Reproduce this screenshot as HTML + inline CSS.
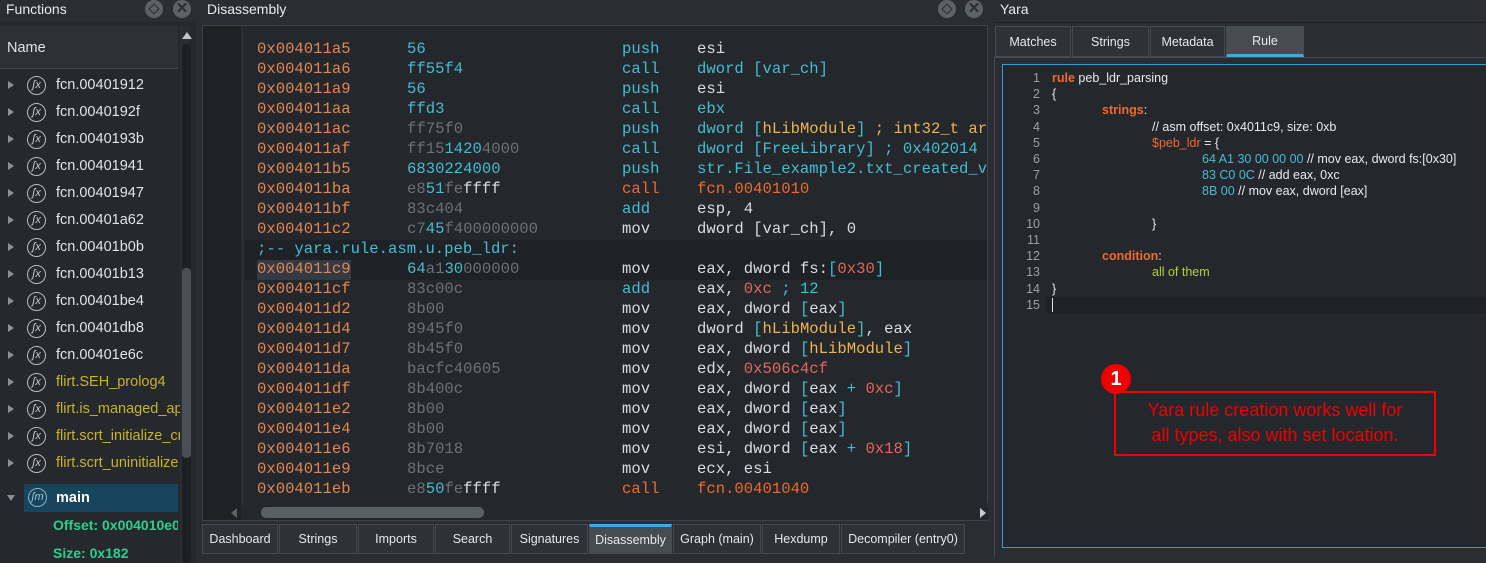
<!DOCTYPE html>
<html><head><meta charset="utf-8"><style>
*{margin:0;padding:0;box-sizing:border-box}
body{width:1486px;height:563px;background:#2a2e33;position:relative;overflow:hidden;font-family:"Liberation Sans",sans-serif;color:#e0e4e8}
.a{position:absolute}
.title{font-size:14px;color:#e8eaec}
.mono{font-family:"Liberation Mono",monospace;font-size:15.6px;white-space:pre}
.ln{position:absolute;left:257px;width:731px;height:20px;line-height:20px}
.ln>span{position:absolute;top:0}
.A{left:0}.B{left:150px}.M{left:365px}.P{left:440px}
.c{color:#45bcd2}.o{color:#e28652}.w{color:#d8dde2}.g{color:#6c7176}.n{color:#e3675a}.y{color:#e9b552}.r{color:#ef6a2a}
.fr{position:absolute;left:24px;height:27px;line-height:27px;font-size:14.5px;width:156px;overflow:hidden;white-space:nowrap}
.tri{position:absolute;left:8px;top:9px;width:0;height:0;border-left:6px solid #8a9096;border-top:4.5px solid transparent;border-bottom:4.5px solid transparent}
.ic{position:absolute;left:4px;top:4px;width:19px;height:19px;border:1.5px solid #b8bcc0;border-radius:50%;font-size:11px;line-height:16px;text-align:center;color:#c8ccd0;font-style:italic}
.tab{position:absolute;top:524px;height:30px;background:#2e3237;border:1px solid #464b51;font-size:12.5px;line-height:29px;text-align:center;color:#e6e8ea}
.yt{position:absolute;top:26px;height:31px;background:#2e3237;border:1px solid #464b51;font-size:12.5px;line-height:30px;text-align:center;color:#e6e8ea}
.yl{position:absolute;left:1052px;font-size:12.5px;height:16.2px;line-height:16.2px;white-space:pre;color:#e8eaec}
.yn{position:absolute;left:1004px;width:36px;text-align:right;font-size:12.5px;height:16.2px;line-height:16.2px;color:#9aa0a6}
</style></head><body>
<!-- Functions panel -->
<div class="a" style="left:0;top:0;width:196px;height:20px;background:#2a2e33"></div>
<div class="a title" style="left:6px;top:1px">Functions</div>
<div class="a" style="left:145px;top:0;width:18px;height:18px;border-radius:50%;background:#5d6268"></div>
<div class="a" style="left:150px;top:5px;width:8px;height:8px;border:1.5px solid #2a2e33;transform:rotate(45deg)"></div>
<div class="a" style="left:173px;top:0;width:18px;height:18px;border-radius:50%;background:#5d6268;color:#2a2e33;font-size:15px;line-height:18px;text-align:center;font-weight:bold">✕</div>
<div class="a" style="left:0;top:22px;width:196px;height:541px;background:#25292d"></div>
<div class="a" style="left:0;top:26px;width:178px;height:43px;background:#2d3136;border-bottom:1px solid #41464c"></div>
<div class="a" style="left:7px;top:40px;font-size:14.5px">Name</div>
<div class="a" style="left:180px;top:26px;width:10px;height:537px;background:#2a2e33"></div>
<div class="a" style="left:182px;top:32px;width:0;height:0;border-bottom:7px solid #c0c4c8;border-left:5px solid transparent;border-right:5px solid transparent"></div>
<div class="a" style="left:182px;top:44px;width:9px;height:519px;background:#1d2023;border-radius:4px"></div>
<div class="a" style="left:182px;top:268px;width:9px;height:190px;background:#4a4f55;border-radius:4px"></div>

<div class="fr" style="top:72px;left:0;width:180px"><div class="tri"></div><div class="ic" style="left:27px">ʃx</div><span style="position:absolute;left:56px">fcn.00401912</span></div>
<div class="fr" style="top:99px;left:0;width:180px"><div class="tri"></div><div class="ic" style="left:27px">ʃx</div><span style="position:absolute;left:56px">fcn.0040192f</span></div>
<div class="fr" style="top:126px;left:0;width:180px"><div class="tri"></div><div class="ic" style="left:27px">ʃx</div><span style="position:absolute;left:56px">fcn.0040193b</span></div>
<div class="fr" style="top:153px;left:0;width:180px"><div class="tri"></div><div class="ic" style="left:27px">ʃx</div><span style="position:absolute;left:56px">fcn.00401941</span></div>
<div class="fr" style="top:180px;left:0;width:180px"><div class="tri"></div><div class="ic" style="left:27px">ʃx</div><span style="position:absolute;left:56px">fcn.00401947</span></div>
<div class="fr" style="top:207px;left:0;width:180px"><div class="tri"></div><div class="ic" style="left:27px">ʃx</div><span style="position:absolute;left:56px">fcn.00401a62</span></div>
<div class="fr" style="top:234px;left:0;width:180px"><div class="tri"></div><div class="ic" style="left:27px">ʃx</div><span style="position:absolute;left:56px">fcn.00401b0b</span></div>
<div class="fr" style="top:261px;left:0;width:180px"><div class="tri"></div><div class="ic" style="left:27px">ʃx</div><span style="position:absolute;left:56px">fcn.00401b13</span></div>
<div class="fr" style="top:288px;left:0;width:180px"><div class="tri"></div><div class="ic" style="left:27px">ʃx</div><span style="position:absolute;left:56px">fcn.00401be4</span></div>
<div class="fr" style="top:315px;left:0;width:180px"><div class="tri"></div><div class="ic" style="left:27px">ʃx</div><span style="position:absolute;left:56px">fcn.00401db8</span></div>
<div class="fr" style="top:342px;left:0;width:180px"><div class="tri"></div><div class="ic" style="left:27px">ʃx</div><span style="position:absolute;left:56px">fcn.00401e6c</span></div>
<div class="fr" style="top:369px;left:0;width:180px;color:#c9b22a"><div class="tri"></div><div class="ic" style="left:27px">ʃx</div><span style="position:absolute;left:56px">flirt.SEH_prolog4</span></div>
<div class="fr" style="top:396px;left:0;width:180px;color:#c9b22a"><div class="tri"></div><div class="ic" style="left:27px">ʃx</div><span style="position:absolute;left:56px">flirt.is_managed_app</span></div>
<div class="fr" style="top:423px;left:0;width:180px;color:#c9b22a"><div class="tri"></div><div class="ic" style="left:27px">ʃx</div><span style="position:absolute;left:56px">flirt.scrt_initialize_crt</span></div>
<div class="fr" style="top:450px;left:0;width:180px;color:#c9b22a"><div class="tri"></div><div class="ic" style="left:27px">ʃx</div><span style="position:absolute;left:56px">flirt.scrt_uninitialize</span></div>
<div class="a" style="left:24px;top:484px;width:154px;height:28px;background:#17455e"></div>
<div class="a" style="left:7px;top:495px;border-top:6px solid #8a9096;border-left:4.5px solid transparent;border-right:4.5px solid transparent"></div>
<div class="ic" style="position:absolute;left:28px;top:488px;border-color:#8fb0c0;color:#a0c0d0">ʃm</div>
<div class="a" style="left:56px;top:490px;font-size:14.5px;font-weight:bold;color:#fff">main</div>
<div class="a" style="left:53px;top:517px;font-size:14px;font-weight:bold;color:#2ecf8e;width:125px;overflow:hidden;white-space:nowrap">Offset: 0x004010e0</div>
<div class="a" style="left:53px;top:545px;font-size:14px;font-weight:bold;color:#2ecf8e">Size: 0x182</div>

<!-- Disassembly panel -->
<div class="a" style="left:198px;top:0;width:792px;height:563px;background:#2a2e33"></div>
<div class="a title" style="left:207px;top:1px">Disassembly</div>
<div class="a" style="left:938px;top:0;width:18px;height:18px;border-radius:50%;background:#5d6268"></div>
<div class="a" style="left:943px;top:5px;width:8px;height:8px;border:1.5px solid #2a2e33;transform:rotate(45deg)"></div>
<div class="a" style="left:965px;top:0;width:18px;height:18px;border-radius:50%;background:#5d6268;color:#2a2e33;font-size:15px;line-height:18px;text-align:center;font-weight:bold">✕</div>
<div class="a" style="left:202px;top:25px;width:786px;height:496px;background:#24282c;border:1px solid #3e4349;overflow:hidden">
<div class="a" style="left:0;top:0;width:38px;height:496px;background:#1f2225"></div>
<div class="a" style="left:38px;top:0;width:3px;height:480px;background:#2a2e33"></div>
<div class="a" style="left:42px;top:214px;width:744px;height:40px;background:#1e2125"></div>
<div class="a" style="left:54px;top:234px;width:94px;height:20px;background:#343a44"></div>
</div>
<div class="a mono" style="left:0;top:0;width:988px;height:520px;overflow:hidden">
<div class="ln" style="top:39px"><span class="A o">0x004011a5</span><span class="B c">56</span><span class="M c">push</span><span class="P w">esi</span></div>
<div class="ln" style="top:59px"><span class="A o">0x004011a6</span><span class="B c">ff55f4</span><span class="M c">call</span><span class="P c">dword [var_ch]</span></div>
<div class="ln" style="top:79px"><span class="A o">0x004011a9</span><span class="B c">56</span><span class="M c">push</span><span class="P w">esi</span></div>
<div class="ln" style="top:99px"><span class="A o">0x004011aa</span><span class="B c">ffd3</span><span class="M c">call</span><span class="P c">ebx</span></div>
<div class="ln" style="top:119px"><span class="A o">0x004011ac</span><span class="B g">ff75f0</span><span class="M c">push</span><span class="P"><span class="c">dword [</span><span class="y">hLibModule</span><span class="c">]</span><span class="y"> ; int32_t arg</span></span></div>
<div class="ln" style="top:139px"><span class="A o">0x004011af</span><span class="B"><span class="g">ff15</span><span class="c">1420</span><span class="g">4000</span></span><span class="M c">call</span><span class="P c">dword [FreeLibrary] ; 0x402014</span></div>
<div class="ln" style="top:159px"><span class="A o">0x004011b5</span><span class="B c">6830224000</span><span class="M c">push</span><span class="P c">str.File_example2.txt_created_v</span></div>
<div class="ln" style="top:179px"><span class="A o">0x004011ba</span><span class="B"><span class="g">e8</span><span class="c">51</span><span class="g">fe</span><span class="w">ffff</span></span><span class="M r">call</span><span class="P r">fcn.00401010</span></div>
<div class="ln" style="top:199px"><span class="A o">0x004011bf</span><span class="B g">83c404</span><span class="M c">add</span><span class="P w">esp, 4</span></div>
<div class="ln" style="top:219px"><span class="A o">0x004011c2</span><span class="B"><span class="g">c7</span><span class="c">45</span><span class="g">f400000000</span></span><span class="M w">mov</span><span class="P w">dword [var_ch], 0</span></div>
<div class="ln" style="top:239px"><span class="A c">;-- yara.rule.asm.u.peb_ldr:</span></div>
<div class="ln" style="top:259px"><span class="A o">0x004011c9</span><span class="B"><span class="c">64</span><span class="g">a1</span><span class="c">30</span><span class="g">000000</span></span><span class="M w">mov</span><span class="P"><span class="w">eax, dword fs:</span><span class="c">[</span><span class="n">0x30</span><span class="c">]</span></span></div>
<div class="ln" style="top:279px"><span class="A o">0x004011cf</span><span class="B g">83c00c</span><span class="M c">add</span><span class="P"><span class="w">eax, </span><span class="n">0xc</span><span class="c"> ; 12</span></span></div>
<div class="ln" style="top:299px"><span class="A o">0x004011d2</span><span class="B g">8b00</span><span class="M w">mov</span><span class="P"><span class="w">eax, dword </span><span class="c">[</span><span class="w">eax</span><span class="c">]</span></span></div>
<div class="ln" style="top:319px"><span class="A o">0x004011d4</span><span class="B g">8945f0</span><span class="M w">mov</span><span class="P"><span class="w">dword </span><span class="c">[</span><span class="y">hLibModule</span><span class="c">]</span><span class="w">, eax</span></span></div>
<div class="ln" style="top:339px"><span class="A o">0x004011d7</span><span class="B g">8b45f0</span><span class="M w">mov</span><span class="P"><span class="w">eax, dword </span><span class="c">[</span><span class="y">hLibModule</span><span class="c">]</span></span></div>
<div class="ln" style="top:359px"><span class="A o">0x004011da</span><span class="B g">bacfc40605</span><span class="M w">mov</span><span class="P"><span class="w">edx, </span><span class="n">0x506c4cf</span></span></div>
<div class="ln" style="top:379px"><span class="A o">0x004011df</span><span class="B g">8b400c</span><span class="M w">mov</span><span class="P"><span class="w">eax, dword </span><span class="c">[</span><span class="w">eax </span><span class="c">+</span> <span class="n">0xc</span><span class="c">]</span></span></div>
<div class="ln" style="top:399px"><span class="A o">0x004011e2</span><span class="B g">8b00</span><span class="M w">mov</span><span class="P"><span class="w">eax, dword </span><span class="c">[</span><span class="w">eax</span><span class="c">]</span></span></div>
<div class="ln" style="top:419px"><span class="A o">0x004011e4</span><span class="B g">8b00</span><span class="M w">mov</span><span class="P"><span class="w">eax, dword </span><span class="c">[</span><span class="w">eax</span><span class="c">]</span></span></div>
<div class="ln" style="top:439px"><span class="A o">0x004011e6</span><span class="B g">8b7018</span><span class="M w">mov</span><span class="P"><span class="w">esi, dword </span><span class="c">[</span><span class="w">eax </span><span class="c">+</span> <span class="n">0x18</span><span class="c">]</span></span></div>
<div class="ln" style="top:459px"><span class="A o">0x004011e9</span><span class="B g">8bce</span><span class="M w">mov</span><span class="P w">ecx, esi</span></div>
<div class="ln" style="top:479px"><span class="A o">0x004011eb</span><span class="B"><span class="g">e8</span><span class="c">50</span><span class="g">fe</span><span class="w">ffff</span></span><span class="M r">call</span><span class="P r">fcn.00401040</span></div>
</div>
<div class="a" style="left:244px;top:503px;width:744px;height:17px;background:#24282c"></div>
<div class="a" style="left:231px;top:508px;border-right:6px solid #5c6167;border-top:5px solid transparent;border-bottom:5px solid transparent"></div>
<div class="a" style="left:261px;top:507px;width:223px;height:11px;background:#5a5f65;border-radius:5px"></div>
<div class="a" style="left:980px;top:508px;border-left:6px solid #c8ccd0;border-top:5px solid transparent;border-bottom:5px solid transparent"></div>
<div class="tab" style="left:202px;width:76px">Dashboard</div>
<div class="tab" style="left:279px;width:78px">Strings</div>
<div class="tab" style="left:358px;width:76px">Imports</div>
<div class="tab" style="left:435px;width:75px">Search</div>
<div class="tab" style="left:511px;width:77px">Signatures</div>
<div class="tab" style="left:589px;width:83px;background:#474c53;border-top:3px solid #3fa9e0;line-height:27px">Disassembly</div>
<div class="tab" style="left:673px;width:88px">Graph (main)</div>
<div class="tab" style="left:762px;width:78px">Hexdump</div>
<div class="tab" style="left:841px;width:124px">Decompiler (entry0)</div>

<!-- Yara panel -->
<div class="a" style="left:990px;top:0;width:496px;height:563px;background:#2a2e33"></div>
<div class="a" style="left:994px;top:22px;width:492px;height:1px;background:#1f2225"></div>
<div class="a title" style="left:1000px;top:1px">Yara</div>
<div class="a" style="left:994px;top:57px;width:492px;height:500px;border-top:1px solid #464b51;border-left:1px solid #464b51"></div>
<div class="yt" style="left:995px;width:76px">Matches</div>
<div class="yt" style="left:1072px;width:77px">Strings</div>
<div class="yt" style="left:1150px;width:75px">Metadata</div>
<div class="yt" style="left:1226px;width:78px;background:#474c53;border-bottom:3px solid #3fa9e0;line-height:28px">Rule</div>
<div class="a" style="left:1002px;top:64px;width:490px;height:484px;background:#24282c;border:1.5px solid #2e9fdc"></div>
<div class="a" style="left:1046px;top:297px;width:440px;height:16px;background:#1e2125"></div>
<div class="yn" style="top:70px">1</div><div class="yn" style="top:86.2px">2</div><div class="yn" style="top:102.4px">3</div><div class="yn" style="top:118.6px">4</div><div class="yn" style="top:134.8px">5</div><div class="yn" style="top:151px">6</div><div class="yn" style="top:167.2px">7</div><div class="yn" style="top:183.4px">8</div><div class="yn" style="top:199.6px">9</div><div class="yn" style="top:215.8px">10</div><div class="yn" style="top:232px">11</div><div class="yn" style="top:248.2px">12</div><div class="yn" style="top:264.4px">13</div><div class="yn" style="top:280.6px">14</div><div class="yn" style="top:296.8px">15</div>
<div class="yl" style="top:70px"><b style="color:#ef6a2a">rule</b> peb_ldr_parsing</div>
<div class="yl" style="top:86.2px">{</div>
<div class="yl" style="top:102.4px;left:1102px"><b style="color:#ef6a2a">strings</b>:</div>
<div class="yl" style="top:118.6px;left:1152px">// asm offset: 0x4011c9, size: 0xb</div>
<div class="yl" style="top:134.8px;left:1152px"><span style="color:#ef6a2a">$peb_ldr</span> = {</div>
<div class="yl" style="top:151px;left:1202px"><span style="color:#45bcd2">64 A1 30 00 00 00</span> // mov eax, dword fs:[0x30]</div>
<div class="yl" style="top:167.2px;left:1202px"><span style="color:#45bcd2">83 C0 0C</span> // add eax, 0xc</div>
<div class="yl" style="top:183.4px;left:1202px"><span style="color:#45bcd2">8B 00</span> // mov eax, dword [eax]</div>
<div class="yl" style="top:215.8px;left:1152px">}</div>
<div class="yl" style="top:248.2px;left:1102px"><b style="color:#ef6a2a">condition</b>:</div>
<div class="yl" style="top:264.4px;left:1152px;color:#b8d030">all of them</div>
<div class="yl" style="top:280.6px">}</div>
<div class="a" style="left:1052px;top:298px;width:1px;height:14px;background:#e0e0e0"></div>

<!-- annotation -->
<div class="a" style="left:1114px;top:391px;width:322px;height:65px;border:2px solid #f00000"></div>
<div class="a" style="left:1114px;top:398px;width:322px;text-align:center;font-size:18px;line-height:25px;color:#f00000">Yara rule creation works well for<br>all types, also with set location.</div>
<div class="a" style="left:1101px;top:364px;width:30px;height:30px;border-radius:50%;background:#f00000;color:#fff;font-weight:bold;font-size:20px;line-height:30px;text-align:center">1</div>
</body></html>
